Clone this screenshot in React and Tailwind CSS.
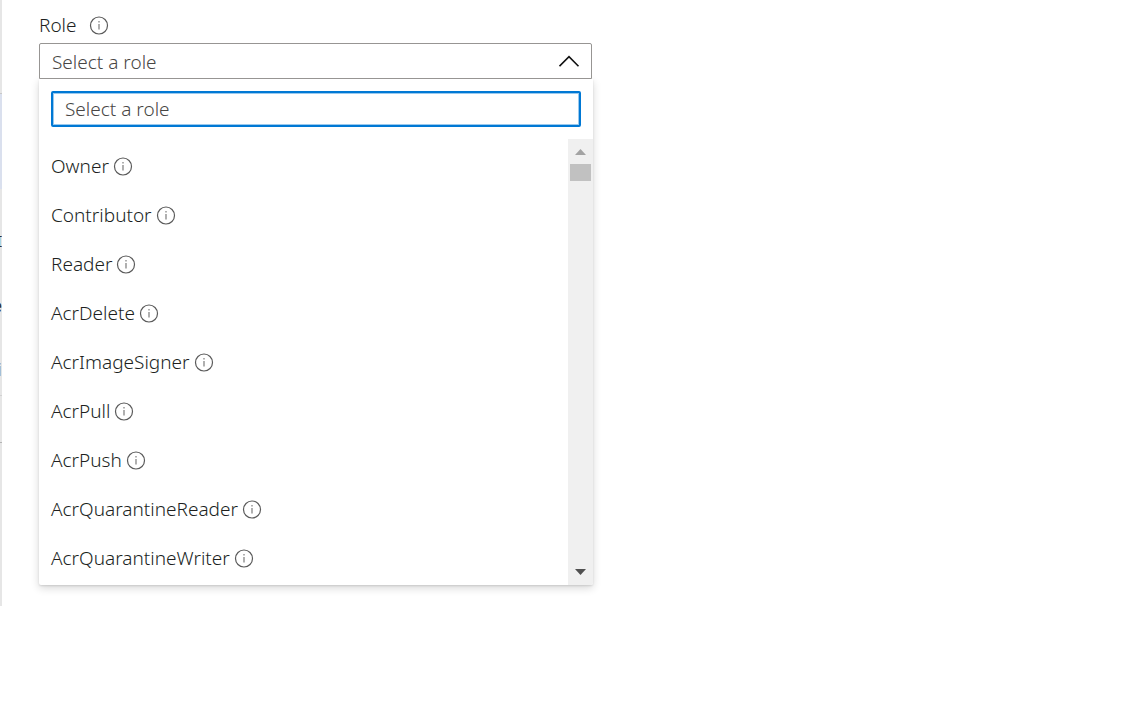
import React, { useState } from 'react';

const roles = [
    'Owner',
    'Contributor',
    'Reader',
    'AcrDelete',
    'AcrImageSigner',
    'AcrPull',
    'AcrPush',
    'AcrQuarantineReader',
    'AcrQuarantineWriter',
];

function InfoIcon() {
    return (
        <svg className="h-5 w-5 shrink-0" viewBox="0 0 20 20" fill="none" aria-hidden="true">
            <circle cx="10" cy="9.5" r="8.5" stroke="#5a5a5a" strokeWidth="1.2" />
            <path d="M10 8v5.5" stroke="#858585" strokeWidth="1.3" />
            <path d="M10 5v1.5" stroke="#858585" strokeWidth="1.3" />
        </svg>
    );
}

// Right edge of the blade that sits underneath this one
function PreviousBlade() {
    return (
        <div
            className="flex h-[606px] w-[2px] shrink-0 flex-col items-end overflow-hidden bg-[#e6e6e6] text-lg leading-6 text-[#323130]"
            aria-hidden="true"
        >
            <div className="h-[94px] w-full shrink-0 border-b border-[#c8c8c8]" />
            <div className="h-[95px] w-full shrink-0 bg-[#dae0ee]" />
            <div className="mt-10 h-6 shrink-0 text-xs leading-6 font-normal">[</div>
            <div className="mt-10 h-6 shrink-0 font-semibold">e</div>
            <div className="mt-10 h-6 shrink-0 text-[#8a8886]">i</div>
            <div className="h-[15px] w-full shrink-0 border-b border-[#d2d2d2]" />
            <div className="h-[47px] w-full shrink-0 border-b border-[#b4b4b4]" />
        </div>
    );
}

function Scrollbar() {
    return (
        <div className="flex w-[25px] shrink-0 flex-col items-center bg-[#f0f0f0]" aria-hidden="true">
            <div className="flex h-[25px] items-center">
                <svg className="h-[6px] w-[11px]" viewBox="0 0 11 6">
                    <path d="M5.5 0L11 6H0z" fill="#a3a3a3" />
                </svg>
            </div>
            <div className="h-[17px] w-[21px] bg-[#c1c1c1]" />
            <div className="mt-auto flex h-[27px] items-center">
                <svg className="h-[6px] w-[11px]" viewBox="0 0 11 6">
                    <path d="M0 0h11L5.5 6z" fill="#505050" />
                </svg>
            </div>
        </div>
    );
}

export default function App() {
    const [selected, setSelected] = useState('');
    const [filter, setFilter] = useState('');

    const visible = roles.filter((role) => role.toLowerCase().includes(filter.toLowerCase()));

    return (
        <div className="flex min-h-screen items-start bg-white font-['Segoe_UI','Noto_Sans',sans-serif] text-[19px] font-light text-[#201f1e]">
            <PreviousBlade />

            <main className="min-w-0 flex-1 pt-[11px] pl-[37px]">
                <div className="w-full max-w-[554px]">
                    <div className="flex h-8 items-center gap-3 pb-[3px]">
                        <label htmlFor="role">Role</label>
                        <InfoIcon />
                    </div>

                    <div className="relative mr-px">
                        <select
                            id="role"
                            value={selected}
                            onChange={(e) => setSelected(e.target.value)}
                            className="block h-9 w-full appearance-none rounded-t-xs border border-[#979593] bg-white pt-[2px] pr-10 pl-3 text-[#484644] outline-none"
                        >
                            <option value="">Select a role</option>
                            {roles.map((role) => (
                                <option key={role} value={role}>{role}</option>
                            ))}
                        </select>
                        <svg
                            className="pointer-events-none absolute top-3 right-3 h-3 w-[21px]"
                            viewBox="0 0 21 12"
                            fill="none"
                            aria-hidden="true"
                        >
                            <path d="M0.5 11.2L10 1.7L19.5 11.2" stroke="#111" strokeWidth="1.6" />
                        </svg>
                    </div>

                    {/* Dropdown */}
                    <div className="overflow-hidden rounded-b-xs bg-white shadow-[0_3px_9px_0_rgba(0,0,0,0.16),0_1px_2px_0_rgba(0,0,0,0.11)]">
                        <div className="p-3">
                            <input
                                type="text"
                                aria-label="Filter roles"
                                placeholder="Select a role"
                                value={filter}
                                onChange={(e) => setFilter(e.target.value)}
                                className="block h-9 w-full rounded-xs border-2 border-[#0078d4] px-3 inset-shadow-[0_0_0_1px_#99c9ee] outline-none placeholder:text-[#484644]"
                            />
                        </div>

                        <div className="flex">
                            <ul className="min-w-0 flex-1 pt-[3px] pb-[2px]" role="listbox" aria-label="Roles">
                                {visible.map((role) => (
                                    <li
                                        key={role}
                                        role="option"
                                        aria-selected={role === selected}
                                        onClick={() => setSelected(role)}
                                        className="flex h-[49px] cursor-pointer items-center gap-1 px-3"
                                    >
                                        <span>{role}</span>
                                        <InfoIcon />
                                    </li>
                                ))}
                            </ul>
                            <Scrollbar />
                        </div>
                    </div>
                </div>
            </main>
        </div>
    );
}
